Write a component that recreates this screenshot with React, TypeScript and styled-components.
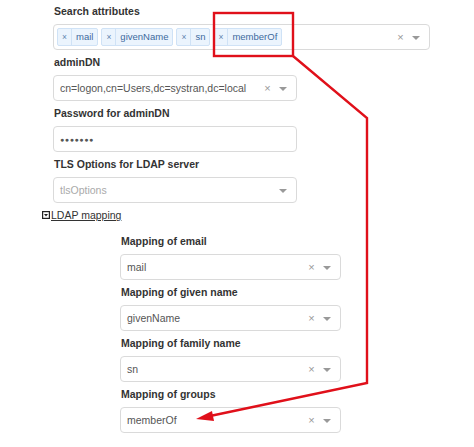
import React from "react";
import styled, { createGlobalStyle } from "styled-components";

const GlobalStyle = createGlobalStyle`
  html, body { margin: 0; padding: 0; background: #fff; }
  body { font-family: "Liberation Sans", Arial, sans-serif; }
  * { box-sizing: border-box; }
`;

const Page = styled.div`
  position: relative;
  width: 474px;
  height: 447px;
  overflow: hidden;
  padding: 4px 0 0 42px;
`;

const Section = styled.div<{ $indent: number; $top?: number }>`
  display: flex;
  flex-direction: column;
  gap: 5px;
  padding-left: ${(p) => p.$indent}px;
  margin-top: ${(p) => p.$top ?? 0}px;
`;

const Field = styled.div`
  display: flex;
  flex-direction: column;
`;

const Label = styled.div`
  font-size: 10.5px;
  font-weight: bold;
  line-height: 14px;
  color: #333;
  margin-bottom: 6px;
  padding-left: 1px;
`;

const Control = styled.div<{ $width: number }>`
  width: ${(p) => p.$width}px;
  height: 26px;
  border: 1px solid #dadada;
  border-radius: 4px;
  background: #fff;
  display: flex;
  align-items: center;
`;

const Value = styled.div<{ $placeholder?: boolean }>`
  flex: 1;
  padding-left: 6px;
  font-size: 10.5px;
  color: ${(p) => (p.$placeholder ? "#aaa" : "#555")};
  white-space: nowrap;
  overflow: hidden;
`;

const Dots = styled.div`
  padding-left: 6px;
  font-size: 7px;
  letter-spacing: 0.6px;
  color: #555;
`;

const Chips = styled.div`
  flex: 1;
  display: flex;
  align-items: center;
  gap: 3px;
  padding-left: 3px;
`;

const Chip = styled.div`
  display: inline-flex;
  align-items: stretch;
  height: 18px;
  margin-top: -1px;
  border: 1px solid #cfe2f6;
  background: #ebf4fd;
  border-radius: 2px;
  font-size: 9.5px;
  line-height: 16px;
`;

const ChipX = styled.span`
  padding: 0 4px;
  border-right: 1px solid #cfe2f6;
  color: #5f84b0;
  font-size: 8.5px;
`;

const ChipLabel = styled.span`
  padding: 0 4px;
  color: #3d6a9e;
`;

const Indicators = styled.div`
  display: flex;
  align-items: center;
  gap: 8px;
  padding-right: 9px;
`;

const Clear = styled.span`
  color: #999;
  font-size: 11px;
  line-height: 11px;
  width: 7px;
  text-align: center;
`;

const Arrow = styled.span`
  width: 0;
  height: 0;
  border-left: 4px solid transparent;
  border-right: 4px solid transparent;
  border-top: 4px solid #999;
  margin-top: 1px;
`;

const Toggle = styled.div`
  margin-top: 5px;
  display: flex;
  align-items: center;
  gap: 1px;
  line-height: 14px;
  font-size: 10.5px;
  color: #333;
`;

const ToggleText = styled.span`
  text-decoration: underline;
`;

const Overlay = styled.svg`
  position: absolute;
  left: 0;
  top: 0;
  pointer-events: none;
`;

type SelectProps = { width: number; value?: string; placeholder?: string; clearable?: boolean };

const Select = ({ width, value, placeholder, clearable = true }: SelectProps) => (
  <Control $width={width}>
    <Value $placeholder={!value}>{value ?? placeholder}</Value>
    <Indicators>
      {clearable && <Clear>×</Clear>}
      <Arrow />
    </Indicators>
  </Control>
);

const attrs = ["mail", "givenName", "sn", "memberOf"];

const mappings = [
  ["Mapping of email", "mail"],
  ["Mapping of given name", "givenName"],
  ["Mapping of family name", "sn"],
  ["Mapping of groups", "memberOf"],
];

export default function App() {
  return (
    <>
      <GlobalStyle />
      <Page>
        <Section $indent={11}>
          <Field>
            <Label>Search attributes</Label>
            <Control $width={377}>
              <Chips>
                {attrs.map((a) => (
                  <Chip key={a}>
                    <ChipX>×</ChipX>
                    <ChipLabel>{a}</ChipLabel>
                  </Chip>
                ))}
              </Chips>
              <Indicators>
                <Clear>×</Clear>
                <Arrow />
              </Indicators>
            </Control>
          </Field>
          <Field>
            <Label>adminDN</Label>
            <Select width={244} value="cn=logon,cn=Users,dc=systran,dc=local" />
          </Field>
          <Field>
            <Label>Password for adminDN</Label>
            <Control $width={244}>
              <Dots>●●●●●●●</Dots>
            </Control>
          </Field>
          <Field>
            <Label>TLS Options for LDAP server</Label>
            <Select width={244} placeholder="tlsOptions" clearable={false} />
          </Field>
        </Section>
        <Toggle>
          <svg width="8" height="8" viewBox="0 0 8 8">
            <rect x="0.6" y="0.6" width="6.8" height="6.8" fill="#fff" stroke="#222" strokeWidth="1.2" />
            <path d="M2 3 L6 3 L4 5.4 Z" fill="#222" />
          </svg>
          <ToggleText>LDAP mapping</ToggleText>
        </Toggle>
        <Section $indent={78} $top={12}>
          {mappings.map(([label, value]) => (
            <Field key={label}>
              <Label>{label}</Label>
              <Select width={221} value={value} />
            </Field>
          ))}
        </Section>
        <Overlay width="474" height="447" viewBox="0 0 474 447">
          <rect x="214" y="13" width="79" height="43" fill="none" stroke="#e0101a" strokeWidth="2.4" />
          <polyline
            points="293,56 367,118 367,383 210,416"
            fill="none"
            stroke="#e0101a"
            strokeWidth="2.4"
            strokeLinejoin="miter"
          />
          <polygon points="196,419 212,411 214,421" fill="#e0101a" />
        </Overlay>
      </Page>
    </>
  );
}
